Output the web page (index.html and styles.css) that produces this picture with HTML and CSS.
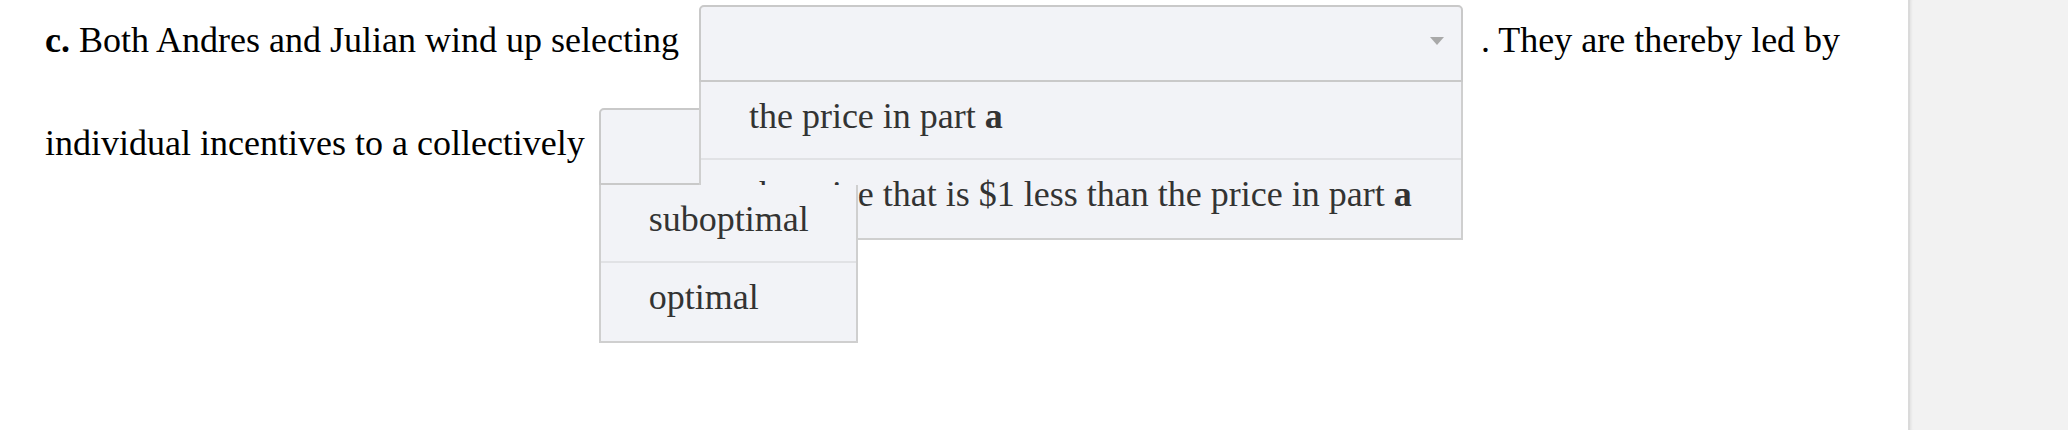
FILE: index.html
```html
<!DOCTYPE html>
<html lang="en">
<head>
<meta charset="utf-8">
<title>Question c</title>
<link rel="stylesheet" href="styles.css">
</head>
<body>
<div class="page">
  <main class="main">
    <p class="question"><b>c.</b> Both Andres and Julian wind up selecting <span class="select select--price"><span class="select-head"><span class="select-arrow"></span></span><span class="select-menu select-menu--price"><span class="option">the price in part <b>a</b></span><span class="option">the price that is $1 less than the price in part <b>a</b></span></span></span>. They are thereby led by individual incentives to a collectively <span class="select select--optimal"><span class="select-head"><span class="select-arrow"></span></span><span class="select-menu select-menu--optimal"><span class="option">suboptimal</span><span class="option">optimal</span></span></span></p>
  </main>
  <aside class="sidebar"></aside>
</div>
</body>
</html>
```

FILE: styles.css
```css
html, body {
  margin: 0;
  padding: 0;
  background: #ffffff;
}

.page {
  display: flex;
  height: 430px;
  overflow: hidden;
}

.main {
  flex: 1;
  padding: 0 45px 0 45px;
  background: #ffffff;
}

.sidebar {
  width: 158px;
  background: #f2f2f2;
  border-left: 2px solid #dadada;
  box-shadow: inset 3px 0 3px -2px rgba(0, 0, 0, 0.08);
}

.question {
  margin: -8px 0 0 0;
  font-family: "Liberation Serif", "Times New Roman", serif;
  font-size: 36px;
  color: #000000;
}

.question b {
  font-weight: bold;
}

.select {
  position: relative;
  display: inline-block;
  vertical-align: middle;
  margin-top: 13px;
  margin-bottom: 13px;
}

.select--price {
  width: 764px;
  margin-left: 11px;
  margin-right: 18px;
}

.select--optimal {
  width: 259px;
  margin-left: 5px;
}

.select-head {
  display: flex;
  justify-content: flex-end;
  align-items: center;
  box-sizing: border-box;
  height: 77px;
  padding-right: 17px;
  background: #f2f3f7;
  border: 2px solid #c9c9c9;
  border-radius: 5px 5px 0 0;
}

.select-arrow {
  width: 0;
  height: 0;
  margin-bottom: 5px;
  border-left: 7px solid transparent;
  border-right: 7px solid transparent;
  border-top: 8px solid #a9a9a9;
}

.select-menu {
  position: absolute;
  top: 100%;
  left: 0;
  right: 0;
  display: flex;
  flex-direction: column;
  background: #f2f3f7;
  border: 2px solid #cfcfcf;
  border-top: 0;
}

.select-menu--price {
  z-index: 2;
}

.select-menu--optimal {
  z-index: 3;
}

.option {
  display: block;
  box-sizing: border-box;
  height: 78px;
  padding: 14px 0 0 48px;
  line-height: 40px;
  color: #333333;
  white-space: nowrap;
  border-bottom: 2px solid #e1e2e5;
}

.option:last-child {
  border-bottom: 0;
}
```
